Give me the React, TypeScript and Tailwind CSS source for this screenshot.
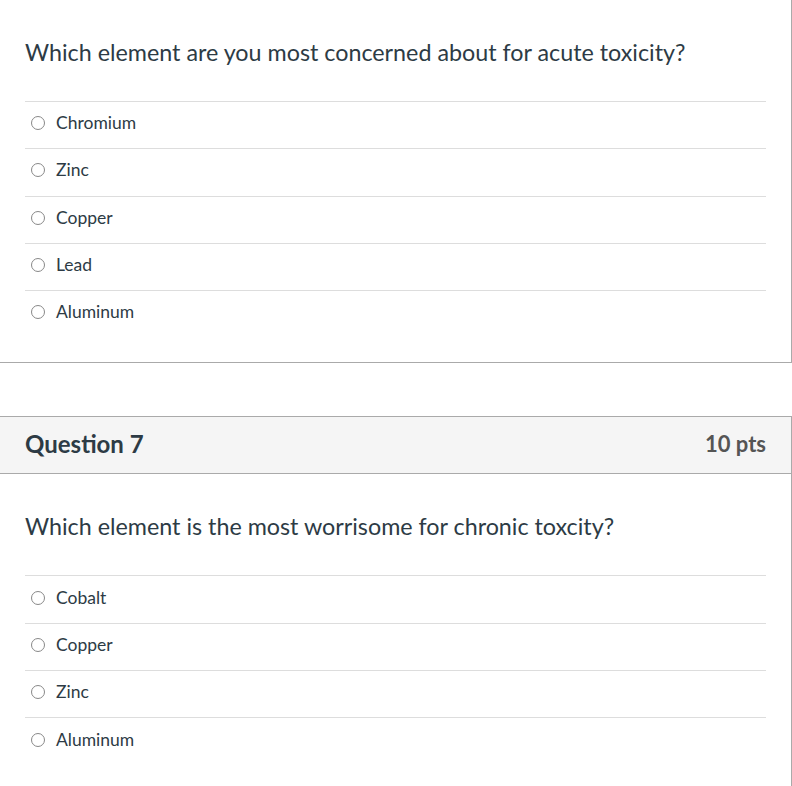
import React from "react";

const font = { fontFamily: "Lato, 'Noto Sans', sans-serif" };

function Option({ label }: { label: string }) {
  return (
    <div className="box-border flex h-[47.3px] items-center border-t border-[#dddddd] pb-[4px] pl-[6px]">
      <span className="box-border h-[14px] w-[14px] shrink-0 rounded-full border border-[#888888] bg-white" />
      <span className="ml-[11px] text-[17.5px] leading-[22px] text-[#2d3b45]">{label}</span>
    </div>
  );
}

function QuestionBody({ text, options }: { text: string; options: string[] }) {
  return (
    <div className="px-[25px]">
      <div className="pt-[38px] pb-[35px] text-[23.3px] leading-[28px] text-[#2d3b45]">{text}</div>
      <div>
        {options.map((o) => (
          <Option key={o} label={o} />
        ))}
      </div>
    </div>
  );
}

export default function App() {
  return (
    <div className="min-h-[786px] w-[792px] overflow-hidden bg-white" style={font}>
      <div className="box-border w-[792px] border-r border-b border-[#aaaaaa] pb-[25px]">
        <QuestionBody
          text="Which element are you most concerned about for acute toxicity?"
          options={["Chromium", "Zinc", "Copper", "Lead", "Aluminum"]}
        />
      </div>
      <div className="mt-[53px] box-border w-[792px] border-t border-r border-[#aaaaaa] pb-[40px]">
        <div className="box-border flex h-[57px] items-center justify-between border-b border-[#aaaaaa] bg-[#f5f5f5] px-[25px] pb-[2px]">
          <span className="text-[24px] font-bold leading-[28px] text-[#2d3b45]">Question 7</span>
          <span className="text-[22px] font-bold leading-[28px] text-[#555555]">10 pts</span>
        </div>
        <QuestionBody
          text="Which element is the most worrisome for chronic toxcity?"
          options={["Cobalt", "Copper", "Zinc", "Aluminum"]}
        />
      </div>
    </div>
  );
}
